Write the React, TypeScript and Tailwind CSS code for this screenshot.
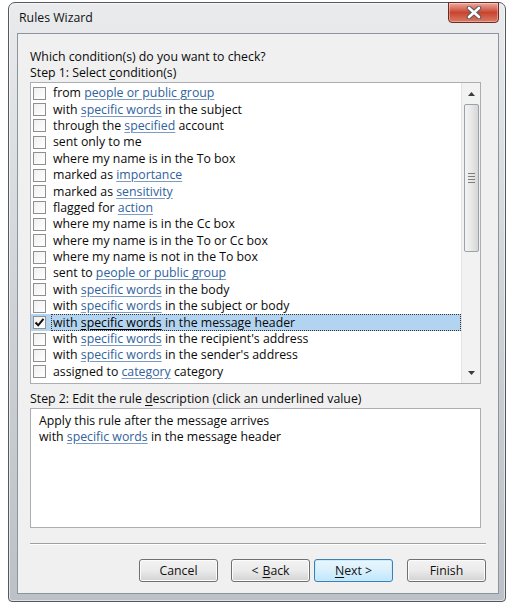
import React from "react";

type Seg = string | { l: string };

const rows: Seg[][] = [
  ["from ", { l: "people or public group" }],
  ["with ", { l: "specific words" }, " in the subject"],
  ["through the ", { l: "specified" }, " account"],
  ["sent only to me"],
  ["where my name is in the To box"],
  ["marked as ", { l: "importance" }],
  ["marked as ", { l: "sensitivity" }],
  ["flagged for ", { l: "action" }],
  ["where my name is in the Cc box"],
  ["where my name is in the To or Cc box"],
  ["where my name is not in the To box"],
  ["sent to ", { l: "people or public group" }],
  ["with ", { l: "specific words" }, " in the body"],
  ["with ", { l: "specific words" }, " in the subject or body"],
  ["with ", { l: "specific words" }, " in the message header"],
  ["with ", { l: "specific words" }, " in the recipient's address"],
  ["with ", { l: "specific words" }, " in the sender's address"],
  ["assigned to ", { l: "category" }, " category"],
];

function Link({ children, sel }: { children: React.ReactNode; sel?: boolean }) {
  return (
    <span
      className={
        sel
          ? "text-[#000] underline underline-offset-2 decoration-[#000]"
          : "text-[#31629d] underline underline-offset-2 decoration-[#7d9cc4]"
      }
    >
      {children}
    </span>
  );
}

function Checkbox({ checked }: { checked?: boolean }) {
  return (
    <div className="w-[13px] h-[13px] shrink-0 border border-[#8e8f8f] bg-gradient-to-br from-[#f0f0f0] to-white flex items-center justify-center">
      {checked && (
        <svg width="11" height="11" viewBox="0 0 11 11">
          <path d="M1.5 5.5 L4.2 8.3 L9.5 1.8" fill="none" stroke="#111" strokeWidth="2" />
        </svg>
      )}
    </div>
  );
}

function Row({ segs, sel }: { segs: Seg[]; sel?: boolean }) {
  return (
    <div className={"h-[16.4px] flex items-center pl-[2px] " + (sel ? "bg-[#b3d4f1]" : "")}>
      <Checkbox checked={sel} />
      <div
        className={
          "ml-[5px] flex-1 h-full flex items-center pl-[2px] whitespace-pre " +
          (sel ? "outline outline-1 outline-dotted outline-[#333] -outline-offset-1" : "")
        }
      >
        {segs.map((s, i) =>
          typeof s === "string" ? (
            <span key={i}>{s}</span>
          ) : (
            <Link key={i} sel={sel}>
              {s.l}
            </Link>
          )
        )}
      </div>
    </div>
  );
}

function Scrollbar() {
  return (
    <div className="w-[19px] shrink-0 border-l border-[#e3e3e3] bg-[#f2f2f2] flex flex-col items-center">
      <div className="h-[21px] w-full flex items-center justify-center">
        <svg width="7" height="4" viewBox="0 0 7 4">
          <path d="M0 4 L3.5 0 L7 4 Z" fill="#3c3c3c" />
        </svg>
      </div>
      <div className="w-[15px] h-[148px] rounded-[2px] border border-[#9ba1a8] bg-gradient-to-r from-[#f3f3f3] via-[#e8e8e8] to-[#d6d6d6] flex items-center justify-center">
        <div className="flex flex-col gap-[2px]">
          <div className="w-[7px] h-[1px] bg-[#7d7d7d]" />
          <div className="w-[7px] h-[1px] bg-[#7d7d7d]" />
          <div className="w-[7px] h-[1px] bg-[#7d7d7d]" />
          <div className="w-[7px] h-[1px] bg-[#7d7d7d]" />
        </div>
      </div>
      <div className="flex-1" />
      <div className="h-[21px] w-full flex items-center justify-center">
        <svg width="7" height="4" viewBox="0 0 7 4">
          <path d="M0 0 L3.5 4 L7 0 Z" fill="#3c3c3c" />
        </svg>
      </div>
    </div>
  );
}

function Btn({ children, def }: { children: React.ReactNode; def?: boolean }) {
  return (
    <div
      className={
        "w-[79px] h-[23px] rounded-[3px] border flex items-center justify-center text-[#111] " +
        (def
          ? "border-[#3c7fb1] bg-gradient-to-b from-[#eaf6fd] via-[#d9f0fc] to-[#bee6fd] shadow-[inset_0_0_0_1px_#c8ecff]"
          : "border-[#707070] bg-gradient-to-b from-[#f2f2f2] via-[#ebebeb] to-[#d2d2d2] shadow-[inset_0_0_0_1px_#fcfcfc]")
      }
    >
      {children}
    </div>
  );
}

function CloseButton() {
  return (
    <div className="absolute right-[6px] top-[-1px] w-[51px] h-[21px] rounded-b-[4px] border border-[#6e2a22] bg-gradient-to-b from-[#e9a99f] via-[#c9432f] to-[#d87a63] flex items-center justify-center shadow-[inset_0_0_0_1px_rgba(255,255,255,0.35)]">
      <svg width="16" height="13" viewBox="0 0 16 13">
        <path d="M3 2 L13 11 M13 2 L3 11" stroke="#5a5a5a" strokeWidth="4.6" strokeLinecap="round" />
        <path d="M3 2 L13 11 M13 2 L3 11" stroke="#ffffff" strokeWidth="2.6" strokeLinecap="round" />
      </svg>
    </div>
  );
}

export default function App() {
  return (
    <div className="w-[511px] h-[607px] bg-white pl-[8px] pt-[2px] pr-[5px] pb-[5px] font-['Open_Sans','Noto_Sans',sans-serif] text-[12.3px] text-[#0a0a0a] leading-[16px]">
      <div className="relative h-full flex flex-col rounded-t-[7px] rounded-b-[4px] border border-[#55595f] bg-gradient-to-b from-[#e9ebed] via-[#cfd3d7] to-[#bcc1c7] shadow-[inset_0_0_0_1px_rgba(255,255,255,0.55)]">
        <div className="h-[30px] shrink-0 flex items-center pl-[10px] text-[12.3px] text-[#111]">Rules Wizard</div>
        <CloseButton />
        <div className="flex-1 ml-[8px] mr-[6px] mb-[7px] border border-[#8d949c] bg-[#f0f0f0] flex flex-col pl-[12px] pr-[12px] pt-[15px]">
          <div className="h-[16px]">Which condition(s) do you want to check?</div>
          <div className="h-[16px]">
            Step 1: Select <span className="underline underline-offset-2">c</span>ondition(s)
          </div>
          <div className="mt-[1px] mr-[5px] h-[302px] border border-[#abadb3] bg-white flex">
            <div className="flex-1 pt-[2px] flex flex-col">
              {rows.map((r, i) => (
                <Row key={i} segs={r} sel={i === 14} />
              ))}
            </div>
            <Scrollbar />
          </div>
          <div className="mt-[7px] h-[16px]">
            Step 2: Edit the rule <span className="underline underline-offset-2">d</span>escription (click an underlined value)
          </div>
          <div className="mt-[1px] mr-[5px] h-[120px] border border-[#abadb3] bg-white pl-[8px] pt-[4px]">
            <div className="h-[16px]">Apply this rule after the message arrives</div>
            <div className="h-[16px] whitespace-pre">
              with <Link>specific words</Link> in the message header
            </div>
          </div>
          <div className="mt-[15px] h-[1px] bg-[#a0a0a0]" />
          <div className="h-[1px] bg-white" />
          <div className="mt-[14px] flex justify-end">
            <Btn>Cancel</Btn>
            <div className="w-[13px]" />
            <Btn>
              &lt; <span className="underline underline-offset-2 ml-[4px]">B</span>ack
            </Btn>
            <div className="w-[4px]" />
            <Btn def>
              <span className="underline underline-offset-2">N</span>ext &gt;
            </Btn>
            <div className="w-[14px]" />
            <Btn>Finish</Btn>
          </div>
        </div>
      </div>
    </div>
  );
}
